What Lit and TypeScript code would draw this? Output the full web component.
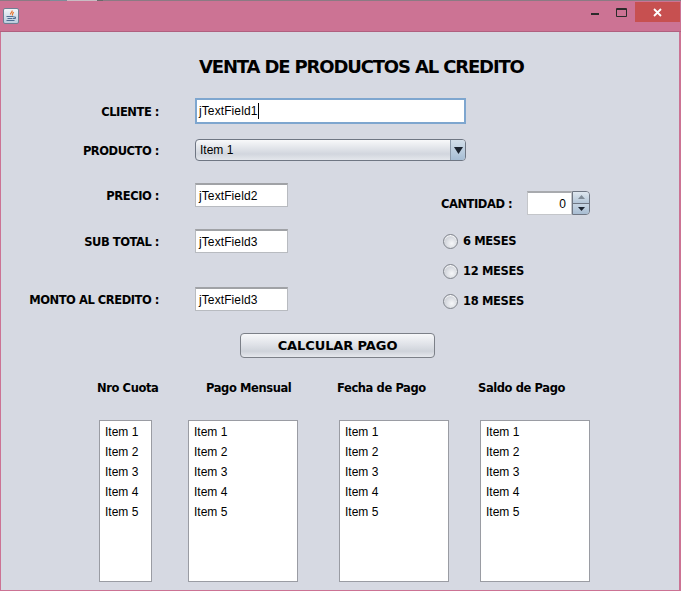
import { LitElement, html, css } from "lit";
import { customElement } from "lit/decorators.js";

const items = ["Item 1", "Item 2", "Item 3", "Item 4", "Item 5"];

@customElement("app-root")
export class AppRoot extends LitElement {
  static styles = css`
    :host { display: block; width: 681px; height: 591px; overflow: hidden; font-family: "Liberation Sans", Arial, sans-serif; }
    * { box-sizing: border-box; }
    .window { width: 681px; height: 591px; display: flex; flex-direction: column; background: #cc7394; }
    .strip { height: 1px; flex: none; background: #8b7a83; display: flex; }
    .strip i { display: block; height: 1px; flex: none; }
    .s1 { width: 17px; margin-left: 50px; background: #7d8b98; }
    .s3 { width: 30px; background: #c9bcc3; }
    .s2 { width: 6px; background: #6b6b6b; }
    .titlebar { height: 31px; flex: none; display: flex; align-items: flex-start; border-bottom: 1px solid #b0607f; }
    .app-icon { margin: 7px 0 0 3px; width: 16px; height: 16px; display: block; }
    .controls { margin-left: auto; margin-right: 1px; margin-top: 1px; display: flex; align-items: flex-start; }
    .ctl { display: flex; align-items: center; justify-content: center; }
    .ctl.min { width: 27px; height: 20px; }
    .ctl.max { width: 27px; height: 20px; }
    .ctl.close { width: 45px; height: 20px; background: #c75050; }
    .content { flex: 1; margin: 0 2px 1px 1px; background: #d6d9e2; padding-top: 23px; display: flex; flex-direction: column; }
    h1 { margin: 0 0 0 198px; height: 24px; font: bold 18px/24px "DejaVu Sans", sans-serif; letter-spacing: -1.15px; color: #000; white-space: nowrap; }
    .upper { display: flex; margin-top: 19px; }
    .left { width: 465px; flex: none; display: flex; flex-direction: column; }
    .row { display: flex; align-items: center; }
    .lbl { width: 158px; flex: none; text-align: right; font: bold 11.5px "DejaVu Sans", sans-serif; letter-spacing: -0.45px; color: #000; white-space: nowrap; margin-right: 36px; padding-top: 2px; }
    .field { height: 24px; width: 93px; background: #fff; border: 1px solid #b8bbc0; border-top: 2px solid #a0a2a6; font-size: 12px; letter-spacing: 0.1px; line-height: 22px; padding-left: 3px; color: #000; white-space: nowrap; }
    .field.focus { width: 271px; height: 26px; border: 2px solid #7ea6cf; padding-left: 2px; line-height: 22px; display: flex; align-items: center; }
    .caret { width: 1px; height: 16px; background: #000; margin-left: 1px; }
    .combo { width: 271px; height: 22px; border: 1px solid #6f7683; border-radius: 4px; display: flex; overflow: hidden; background: linear-gradient(#f8f9fa, #dfe2e8 45%, #d2d6de 70%, #e4e7ec); font-size: 12px; }
    .combo span { flex: 1; line-height: 21px; padding-left: 4px; color: #000; }
    .combo i { width: 15px; flex: none; border-left: 1px solid #8c9aab; background: linear-gradient(#d3dfea, #a6bdd4); display: flex; align-items: center; justify-content: center; }
    .r2 { margin-top: 15px; }
    .r3 { margin-top: 22px; }
    .r4 { margin-top: 22px; }
    .r5 { margin-top: 34px; }
    .right { display: flex; flex-direction: column; margin-left: -26px; padding-top: 93px; }
    .cant { display: flex; align-items: center; padding-left: 1px; }
    .cant .t { width: 86px; flex: none; font: bold 11.5px "DejaVu Sans", sans-serif; letter-spacing: -0.45px; white-space: nowrap; color: #000; padding-top: 2px; }
    .spin { width: 63px; height: 24px; display: flex; }
    .spin .val { flex: 1; background: #fff; border: 1px solid #c4c6ca; border-top: 2px solid #a8aaae; text-align: right; padding-right: 5px; font-size: 12px; line-height: 22px; color: #000; }
    .spin .btns { width: 18px; flex: none; display: flex; flex-direction: column; border: 1px solid #6f7683; border-radius: 0 4px 4px 0; overflow: hidden; }
    .spin .btns b { flex: 1; display: flex; align-items: center; justify-content: center; background: linear-gradient(#dfe7ef, #b4c6d8); }
    .spin .btns b + b { border-top: 1px solid #6f7683; background: linear-gradient(#c8d6e4, #a8bdd2); }
    .radio { display: flex; align-items: center; height: 16px; margin-top: 14px; padding-left: 3px; }
    .radio.first { margin-top: 18px; }
    .dot { width: 15px; height: 15px; border-radius: 50%; flex: none; border: 1px solid #80848c; background: radial-gradient(circle at 60% 65%, #f6f7f9, #d3d6dc 60%, #c0c3ca); box-shadow: inset 0 1px 1px #fff; margin-right: 5px; }
    .radio span { font: bold 11.5px "DejaVu Sans", sans-serif; letter-spacing: -0.36px; color: #000; white-space: nowrap; }
    .btn-row { display: flex; margin-top: 22px; padding-left: 239px; }
    button { width: 195px; height: 25px; padding: 0; border: 1px solid #7c8088; border-radius: 4px; background: linear-gradient(#f7f8fa, #dde0e6 50%, #cfd3da 75%, #e6e8ed); font: bold 13px "DejaVu Sans", sans-serif; letter-spacing: -0.1px; color: #000; }
    .heads { display: flex; margin-top: 22px; height: 16px; align-items: center; }
    .heads span { font: bold 11.5px "DejaVu Sans", sans-serif; letter-spacing: -0.4px; color: #000; white-space: nowrap; flex: none; }
    .h1 { width: 62px; margin-left: 96px; }
    .h2 { width: 86px; margin-left: 47px; }
    .h3 { width: 88px; margin-left: 45px; }
    .h4 { width: 88px; margin-left: 53px; }
    .lists { display: flex; margin-top: 24px; padding-left: 98px; }
    .list { height: 162px; background: #fff; border: 1px solid #9a9ca3; padding: 1px 0 0 5px; flex: none; }
    .list div { height: 20px; line-height: 20px; font-size: 12px; color: #000; }
    .l1 { width: 53px; }
    .l2 { width: 110px; margin-left: 36px; }
    .l3 { width: 110px; margin-left: 41px; }
    .l4 { width: 110px; margin-left: 31px; }
  `;

  private list(cls: string) {
    return html`<div class="list ${cls}">${items.map((i) => html`<div>${i}</div>`)}</div>`;
  }

  render() {
    return html`
      <div class="window">
        <div class="strip"><i class="s1"></i><i class="s3"></i><i class="s2"></i></div>
        <div class="titlebar">
          <svg class="app-icon" viewBox="0 0 16 16">
            <defs><linearGradient id="ig" x1="0" y1="0" x2="0" y2="1"><stop offset="0" stop-color="#f4f7fa"/><stop offset="1" stop-color="#b9cbdc"/></linearGradient></defs>
            <rect x="0.5" y="0.5" width="15" height="15" rx="1.5" fill="url(#ig)" stroke="#6d7f93"/>
            <path d="M9 2.5C10 4 7 5 7.5 6.5M10.5 4C10 5.5 9 6 9.5 7.5" fill="none" stroke="#e8742a" stroke-width="1.2"/>
            <path d="M3.5 8.5h7M4.5 10.5h5M3.5 12.5h8M10.5 9h2v1.5h-2.5" fill="none" stroke="#4e6e93" stroke-width="1"/>
          </svg>
          <div class="controls">
            <div class="ctl min"><svg width="8" height="8" viewBox="0 0 8 8"><rect x="0" y="5" width="8" height="2" fill="#2b2b2b"/></svg></div>
            <div class="ctl max"><svg width="11" height="9" viewBox="0 0 11 9"><path d="M.5 .5h10v8H.5z M.5 1.5h10" fill="none" stroke="#2b2b2b"/></svg></div>
            <div class="ctl close"><svg width="9" height="9" viewBox="0 0 9 9"><path d="M1 1l7 7M8 1L1 8" stroke="#fff" stroke-width="1.8"/></svg></div>
          </div>
        </div>
        <div class="content">
          <h1>VENTA DE PRODUCTOS AL CREDITO</h1>
          <div class="upper">
            <div class="left">
              <div class="row">
                <div class="lbl">CLIENTE :</div>
                <div class="field focus">jTextField1<span class="caret"></span></div>
              </div>
              <div class="row r2">
                <div class="lbl">PRODUCTO :</div>
                <div class="combo"><span>Item 1</span><i><svg width="9" height="7" viewBox="0 0 9 7"><path d="M0 0h9L4.5 7z" fill="#1c2430"/></svg></i></div>
              </div>
              <div class="row r3"><div class="lbl">PRECIO :</div><div class="field">jTextField2</div></div>
              <div class="row r4"><div class="lbl">SUB TOTAL :</div><div class="field">jTextField3</div></div>
              <div class="row r5"><div class="lbl">MONTO AL CREDITO :</div><div class="field">jTextField3</div></div>
            </div>
            <div class="right">
              <div class="cant">
                <div class="t">CANTIDAD :</div>
                <div class="spin">
                  <div class="val">0</div>
                  <div class="btns">
                    <b><svg width="7" height="4" viewBox="0 0 7 4"><path d="M0 4h7L3.5 0z" fill="#7f8a96"/></svg></b>
                    <b><svg width="7" height="4" viewBox="0 0 7 4"><path d="M0 0h7L3.5 4z" fill="#1c2430"/></svg></b>
                  </div>
                </div>
              </div>
              <div class="radio first"><div class="dot"></div><span>6 MESES</span></div>
              <div class="radio"><div class="dot"></div><span>12 MESES</span></div>
              <div class="radio"><div class="dot"></div><span>18 MESES</span></div>
            </div>
          </div>
          <div class="btn-row"><button>CALCULAR PAGO</button></div>
          <div class="heads">
            <span class="h1">Nro Cuota</span><span class="h2">Pago Mensual</span><span class="h3">Fecha de Pago</span><span class="h4">Saldo de Pago</span>
          </div>
          <div class="lists">
            ${this.list("l1")}${this.list("l2")}${this.list("l3")}${this.list("l4")}
          </div>
        </div>
      </div>
    `;
  }
}
